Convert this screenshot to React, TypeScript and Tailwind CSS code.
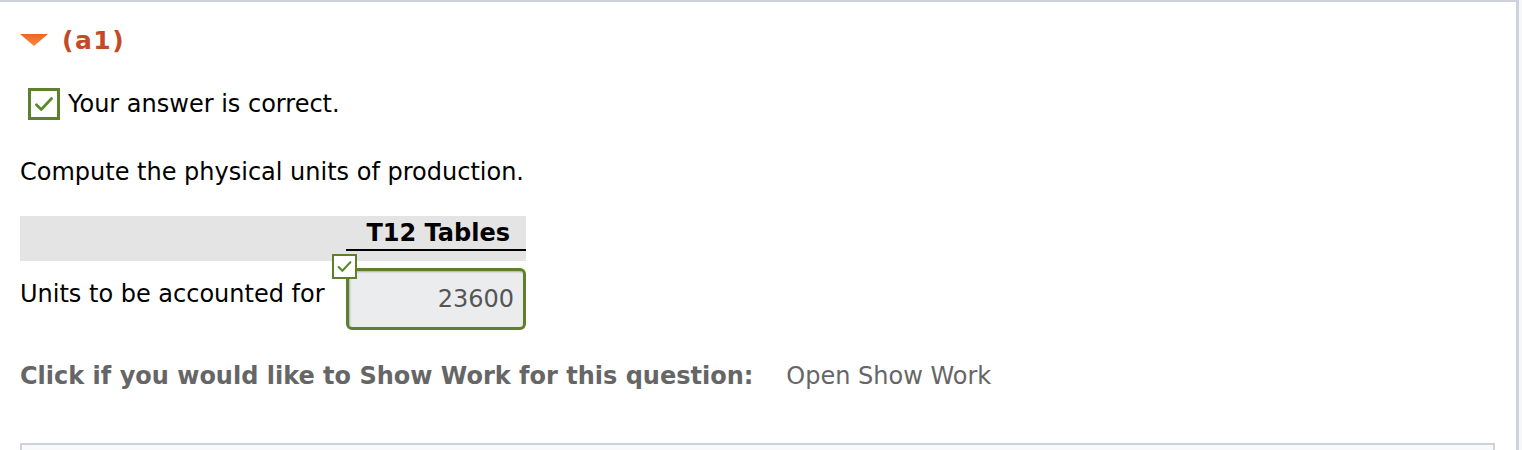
import React from "react"

function Check({ className = "" }: { className?: string }) {
  return (
    <svg viewBox="0 0 16 16" className={className} fill="none">
      <path d="M2.5 8.5 L6 12 L13.5 4" stroke="#5b8a2d" strokeWidth="2" strokeLinecap="round" strokeLinejoin="round" />
    </svg>
  )
}

export default function App() {
  return (
    <div className="w-[1522px] h-[450px] overflow-hidden bg-[#f6f7f9] font-['DejaVu_Sans',Verdana,sans-serif]">
      <div className="w-[1519px] h-[470px] bg-white border-t-2 border-r-[3px] border-[#cdd2dc] pl-5 pr-[21px]">
        {/* Section header */}
        <div className="flex items-center gap-[14px] h-[76px]">
          <svg width="28" height="14" viewBox="0 0 28 14">
            <defs>
              <linearGradient id="tri" x1="0" y1="0" x2="0" y2="1">
                <stop offset="0" stopColor="#f0632a" />
                <stop offset="1" stopColor="#f58a3c" />
              </linearGradient>
            </defs>
            <path d="M0 1 L28 1 L14 13 Z" fill="url(#tri)" />
          </svg>
          <span className="text-[25px] leading-none font-bold text-[#c44a27] tracking-[1.5px]">(a1)</span>
        </div>

        {/* Correct notice */}
        <div className="flex items-center gap-[8px] mt-[10px] ml-[8px]">
          <div className="w-[32px] h-[32px] border-[3px] border-[#5e7f2d] bg-white flex items-center justify-center">
            <Check className="w-[22px] h-[22px]" />
          </div>
          <span className="text-[24px] text-black leading-none">Your answer is correct.</span>
        </div>

        <p className="text-[24px] text-black mt-[40px] leading-[24px]">Compute the physical units of production.</p>

        {/* Table */}
        <div className="mt-[32px] w-[506px]">
          <div className="bg-[#e4e4e4] h-[45px] flex justify-end">
            <div className="w-[180px] h-[35px] border-b-2 border-black flex items-center justify-end pr-[16px]">
              <span className="text-[24px] leading-none font-bold text-black">T12 Tables</span>
            </div>
          </div>
          <div className="flex items-start justify-between pt-[7px]">
            <span className="text-[24px] leading-[24px] text-black mt-[14px]">Units to be accounted for</span>
            <div className="relative w-[180px] h-[62px]">
              <div className="absolute left-[-14px] top-[-14px] w-[25px] h-[25px] border-2 border-[#5e7f2d] bg-white flex items-center justify-center z-10">
                <Check className="w-[17px] h-[17px]" />
              </div>
              <div className="w-full h-full rounded-[6px] border-[3px] border-[#5e7f2d] bg-[#ebecee] shadow-[inset_1px_1px_2px_rgba(0,0,0,0.25)] flex items-center justify-end pr-[9px]">
                <span className="text-[24px] leading-none text-[#555555]">23600</span>
              </div>
            </div>
          </div>
        </div>

        {/* Show work */}
        <div className="flex items-center mt-[34px] text-[24px] leading-[24px] text-[#666666]">
          <span className="font-bold">Click if you would like to Show Work for this question:</span>
          <span className="ml-[33px]">Open Show Work</span>
        </div>

        <div className="mt-[55px] h-[40px] border-t-2 border-l-2 border-r-2 border-[#cdd2dc] bg-[#f8f9fb]" />
      </div>
    </div>
  )
}
